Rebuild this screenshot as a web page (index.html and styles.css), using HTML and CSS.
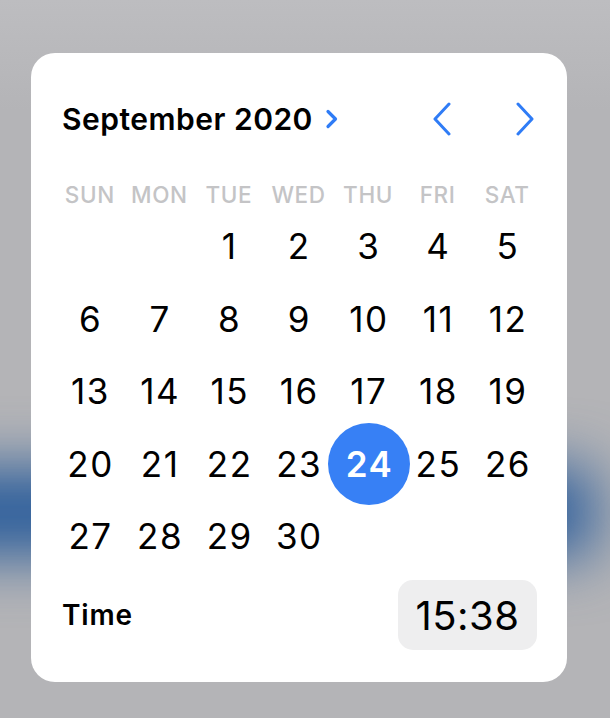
FILE: index.html
```html
<!DOCTYPE html>
<html>
<head>
<meta charset="utf-8">
<link rel="stylesheet" href="styles.css">
</head>
<body>
<div class="backdrop"></div>
<div class="card">
  <div class="header">
    <div class="month">
      <span class="title">September 2020</span>
      <svg class="chev-small" width="14" height="20" viewBox="0 0 14 20"><path d="M3 2.5 L10.5 10 L3 17.5" fill="none" stroke="#2f7cf6" stroke-width="3.2" stroke-linecap="round" stroke-linejoin="round"/></svg>
    </div>
    <div class="nav">
      <svg width="20" height="34" viewBox="0 0 20 34"><path d="M17 2 L3 17 L17 32" fill="none" stroke="#2f7cf6" stroke-width="3" stroke-linecap="round" stroke-linejoin="round"/></svg>
      <svg width="20" height="34" viewBox="0 0 20 34"><path d="M3 2 L17 17 L3 32" fill="none" stroke="#2f7cf6" stroke-width="3" stroke-linecap="round" stroke-linejoin="round"/></svg>
    </div>
  </div>
  <div class="weekdays">
    <span>SUN</span><span>MON</span><span>TUE</span><span>WED</span><span>THU</span><span>FRI</span><span>SAT</span>
  </div>
  <div class="days">
    <span></span><span></span><span>1</span><span>2</span><span>3</span><span>4</span><span>5</span>
    <span>6</span><span>7</span><span>8</span><span>9</span><span>10</span><span>11</span><span>12</span>
    <span>13</span><span>14</span><span>15</span><span>16</span><span>17</span><span>18</span><span>19</span>
    <span>20</span><span>21</span><span>22</span><span>23</span><span class="sel"><b>24</b></span><span>25</span><span>26</span>
    <span>27</span><span>28</span><span>29</span><span>30</span><span></span><span></span><span></span>
  </div>
  <div class="time-row">
    <span class="time-label">Time</span>
    <span class="time-box">15:38</span>
  </div>
</div>
</body>
</html>
```
FILE: styles.css
```css
html, body {
  margin: 0;
  padding: 0;
}
body {
  width: 610px;
  height: 718px;
  overflow: hidden;
  position: relative;
  background: linear-gradient(to bottom, #bdbdc0 0px, #b4b4b7 110px, #b4b4b7 100%);
  font-family: Inter, "Liberation Sans", sans-serif;
  color: #000;
  display: flow-root;
}
.backdrop {
  position: absolute;
  left: -80px;
  top: 468px;
  width: 675px;
  height: 88px;
  background: #2b5d9b;
  filter: blur(30px);
}
.card {
  position: relative;
  margin: 53px 0 0 31px;
  width: 536px;
  height: 629px;
  box-sizing: border-box;
  padding: 44px 25px 0 24px;
  background: #fff;
  border-radius: 24px;
}
.header {
  height: 44px;
  display: flex;
  align-items: center;
  justify-content: space-between;
  padding-left: 7px;
  padding-right: 7px;
}
.month {
  display: flex;
  align-items: center;
  gap: 12px;
}
.title {
  font-size: 30px;
  font-weight: 600;
  letter-spacing: 0.5px;
}
.chev-small {
  margin-top: -1px;
}
.nav {
  display: flex;
  align-items: center;
  gap: 63px;
}
.nav svg {
  display: block;
}
.weekdays {
  margin-top: 37px;
  height: 32px;
  display: grid;
  grid-template-columns: repeat(7, minmax(0, 1fr));
  align-items: center;
  text-align: center;
  font-size: 22.5px;
  font-weight: 500;
  letter-spacing: 0.6px;
  color: #c4c4c6;
}
.days {
  display: grid;
  grid-template-columns: repeat(7, minmax(0, 1fr));
  grid-auto-rows: 72.5px;
  font-size: 35px;
  font-weight: 400;
  letter-spacing: 1.5px;
}
.days span {
  display: flex;
  align-items: center;
  justify-content: center;
  padding-left: 1.5px;
}
.days .sel b {
  flex: none;
  width: 82px;
  height: 82px;
  border-radius: 50%;
  background: #3780f5;
  color: #fff;
  font-weight: 600;
  display: flex;
  align-items: center;
  justify-content: center;
  box-sizing: border-box;
  padding-left: 1.5px;
}
.time-row {
  margin-top: 7.5px;
  height: 70px;
  display: flex;
  align-items: center;
  justify-content: space-between;
  padding-left: 7px;
  padding-right: 5px;
}
.time-label {
  font-size: 28px;
  font-weight: 600;
  letter-spacing: 0.8px;
}
.time-box {
  width: 139px;
  height: 70px;
  box-sizing: border-box;
  border-radius: 15px;
  background: #eeeeef;
  display: flex;
  align-items: center;
  justify-content: center;
  font-size: 40px;
  font-weight: 400;
  letter-spacing: 0.5px;
}
```
